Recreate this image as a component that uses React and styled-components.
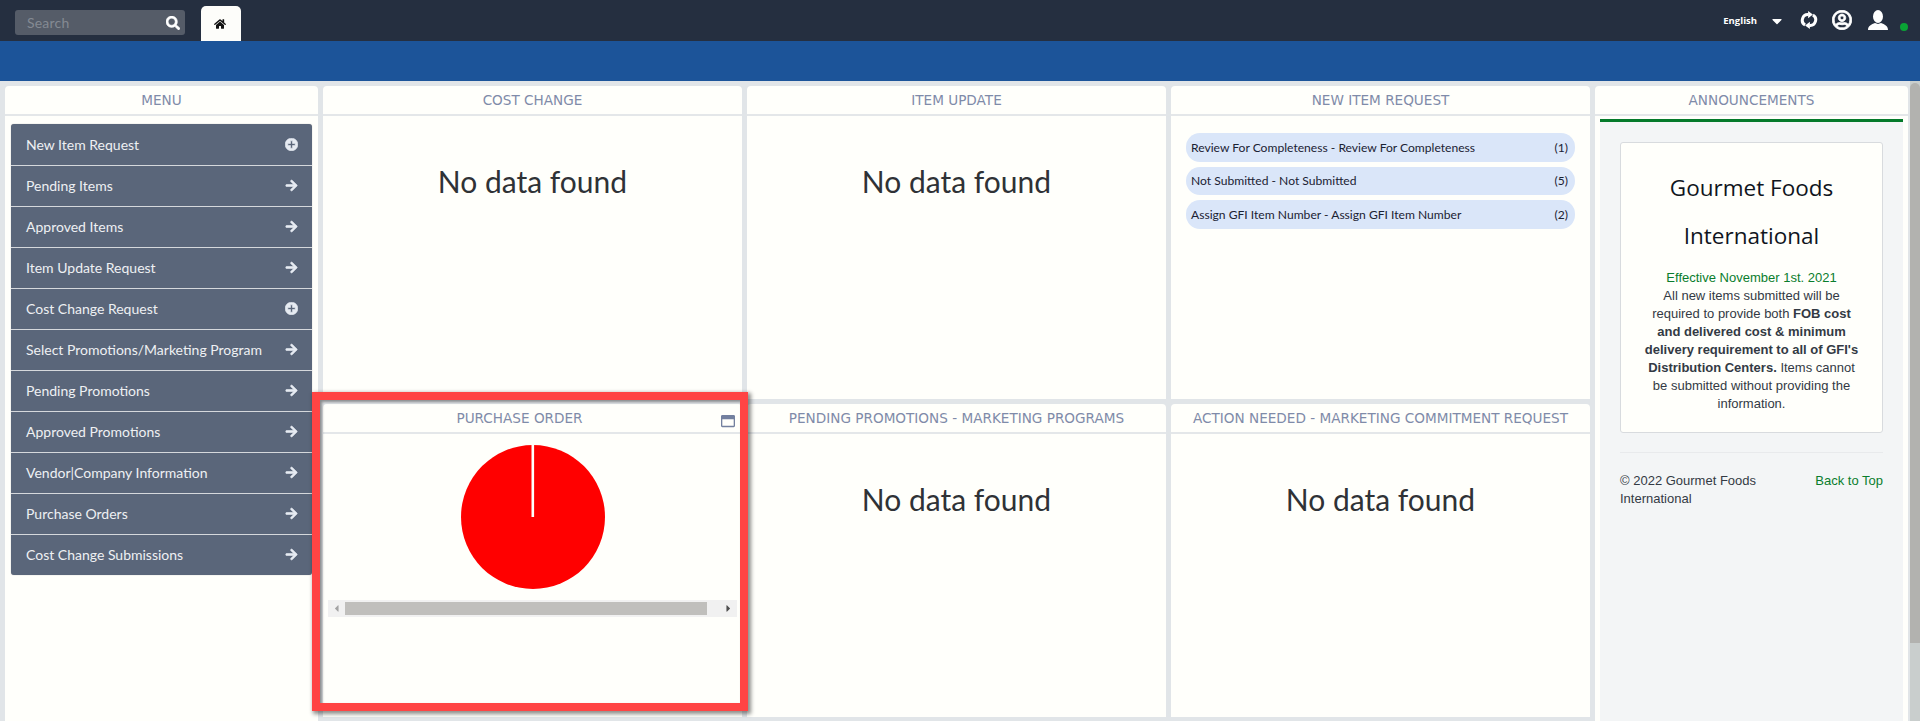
import React from "react";
import styled, { createGlobalStyle } from "styled-components";
import { FaHome, FaSearch, FaPlusCircle, FaArrowRight, FaRegUserCircle, FaCaretDown, FaRegWindowMaximize, FaCaretLeft, FaCaretRight } from "react-icons/fa";

const Global = createGlobalStyle`
  html, body { margin: 0; padding: 0; overflow: hidden; background: #e1e5e8; }
  * { box-sizing: border-box; }
`;

const Page = styled.div`
  width: 1920px; height: 721px; overflow: hidden; display: flex; flex-direction: column;
  background: #e1e5e8; font-family: "Lato", sans-serif;
`;
const TopBar = styled.header`
  height: 41px; flex: none; background: #252f40; display: flex; align-items: flex-start;
  padding-left: 15px; color: #fff;
`;
const SearchBox = styled.div`
  width: 170px; height: 25px; margin-top: 10px; border-radius: 3px; background: #555c68;
  display: flex; align-items: center; justify-content: space-between; padding: 0 5px 0 12px;
  color: #848a93; font-size: 14px; letter-spacing: .2px;
  svg { color: #fff; font-size: 14px; stroke: currentColor; stroke-width: 20; }
`;
const HomeTab = styled.div`
  width: 40px; height: 35px; margin: 6px 0 0 16px; background: #fdfdfa; border-radius: 5px 5px 0 0;
  display: flex; align-items: center; justify-content: center; color: #111; font-size: 12px;
  padding-right: 2px;
`;
const TopRight = styled.div`
  margin-left: auto; display: flex; align-items: center; height: 41px; padding-right: 12px;
`;
const Lang = styled.span`
  font: 700 9.5px "Open Sans", sans-serif; color: #fff; margin-right: 12px;
`;
const Caret = styled(FaCaretDown)`
  font-size: 16px; margin-right: 15px;
`;
const TopIcon = styled.span`
  display: flex; margin-right: ${p => p.$gap}px; margin-top: -1px;
`;
const BoldUserCircle = styled(FaRegUserCircle)`
  font-size: 20px; stroke: currentColor; stroke-width: 22;
`;
const Dot = styled.span`
  width: 8px; height: 8px; border-radius: 50%; background: #0aa335; margin-top: 13px;
`;
const BlueBar = styled.div`
  height: 40px; flex: none; background: #1c5499;
`;
const Content = styled.main`
  flex: 1; display: flex; padding-left: 5px; min-height: 0;
`;
const Board = styled.div`
  display: grid; grid-template-columns: 313px repeat(3, 419px) 313px;
  grid-template-rows: 313px 313px 10px; gap: 5px; padding-top: 5px;
`;
const Panel = styled.section`
  background: #fffffb; border-radius: 4px 4px 0 0; display: flex; flex-direction: column;
  position: relative; min-width: 0; z-index: ${p => p.$lifted ? 2 : 0};
  grid-row: ${p => p.$span ? "1 / span 3" : "auto"};
  grid-column: ${p => p.$col || "auto"};
`;
const PanelHead = styled.div`
  height: 30px; flex: none; border-bottom: 2px solid #e4e7e9;
  display: flex; align-items: center; justify-content: center;
  font: 400 13.6px "DejaVu Sans", sans-serif; color: #7f8ba9; text-transform: uppercase;
  padding-right: ${p => p.$iconSpace ? 26 : 0}px; padding-bottom: 1px;
`;
const MaxButton = styled(FaRegWindowMaximize)`
  position: absolute; right: 7px; top: 10px; font-size: 14px; color: #73809f;
`;
const MenuList = styled.nav`
  margin: 8px 6px 0 6px; border-radius: 3px; overflow: hidden; background: #5a667a;
  box-shadow: 0 0 1px 0 #999;
`;
const MenuRow = styled.div`
  height: 41px; display: flex; align-items: center; justify-content: space-between;
  padding: 0 14px 1px 15px; color: #eef0f3; font-size: 14px;
  border-top: ${p => p.$first ? "none" : "1px solid #d5d8dc"};
  svg { font-size: 13px; color: #e6ebf2; stroke: currentColor; stroke-width: 25; }
`;
const Empty = styled.div`
  text-align: center; font-size: 30px; color: #2f3236; margin-top: 45px; line-height: 40px;
`;
const Pills = styled.div`
  padding: 17px 15px 0; display: flex; flex-direction: column; gap: 5px;
`;
const Pill = styled.div`
  height: 28.5px; border-radius: 14px; background: #dae6f9; display: flex; align-items: center;
  justify-content: space-between; padding: 0 7px 0 5px; font-size: 12.1px; color: #1a2233;
`;
const ChartWrap = styled.div`
  display: flex; justify-content: center; padding-top: 10px;
`;
const HScroll = styled.div`
  margin: 10px 5px 0 5px; height: 17px; background: #f1f1f1; display: flex; align-items: center;
  padding: 0 3px; font-size: 11px;
`;
const ScrollThumb = styled.div`
  width: 362px; height: 13px; background: #c0bfbc;
`;
const ArrowL = styled(FaCaretLeft)` color: #a3a3a3; margin-right: 3px; `;
const ArrowR = styled(FaCaretRight)` color: #505050; margin-left: auto; `;
const Highlight = styled.div`
  position: absolute; left: -11px; right: -6px; top: -12px; bottom: 6px;
  border: 8px solid #ff4444; pointer-events: none;
  box-shadow: 2px 2px 4px 1px rgba(0,0,0,.45), inset 2px 2px 3px rgba(0,0,0,.4);
`;
const AnnBody = styled.div`
  flex: 1; margin: 3px 5px 0; background: #f3f5f6; border-top: 3px solid #047a2a;
  padding: 20px 20px 0 20px; font: 400 13px/18px "Liberation Sans", sans-serif; color: #333a44;
`;
const AnnCard = styled.div`
  height: 291px; background: #fffffb; border: 1px solid #d8dbde; border-radius: 3px;
  padding: 21px 20px 0; text-align: center;
`;
const AnnTitle = styled.h2`
  margin: 0 0 9px; font: 500 22.5px/48px "Open Sans", sans-serif; color: #10151d;
`;
const Green = styled.span` color: #0a7d2d; `;
const Strong = styled.b` font-weight: 700; `;
const Rule = styled.hr`
  border: 0; border-top: 1px solid #e8eaec; margin: 19px 0 19px;
`;
const Foot = styled.div`
  display: flex; justify-content: space-between; align-items: flex-start;
`;
const Copy = styled.div` width: 150px; `;
const Scrollbar = styled.div`
  width: 10px; flex: none; margin-left: 2px; background: #c9cecd;
`;
const ScrollbarThumb = styled.div`
  width: 10px; height: 560px; background: #b2b2af; border-radius: 5px 5px 0 0; margin-top: 2px;
`;

const menu = [
  ["New Item Request", 1], ["Pending Items"], ["Approved Items"], ["Item Update Request"],
  ["Cost Change Request", 1], ["Select Promotions/Marketing Program"], ["Pending Promotions"],
  ["Approved Promotions"], ["Vendor|Company Information"], ["Purchase Orders"], ["Cost Change Submissions"],
];
const pills = [
  ["Review For Completeness - Review For Completeness", 1],
  ["Not Submitted - Not Submitted", 5],
  ["Assign GFI Item Number - Assign GFI Item Number", 2],
];

const RefreshIcon = () => (
  <svg width="18" height="18" viewBox="0 0 17 18" fill="none">
    <path d="M8 3.6A5.6 5.6 0 0 0 4.6 14" stroke="#fff" strokeWidth="3" />
    <path d="M7.6 0L12.4 3.6L7.6 7.2Z" fill="#fff" />
    <path d="M9 14.4A5.6 5.6 0 0 0 12.4 4" stroke="#fff" strokeWidth="3" />
    <path d="M9.4 18L4.6 14.4L9.4 10.8Z" fill="#fff" />
  </svg>
);
const PersonIcon = () => (
  <svg width="20" height="20" viewBox="0 0 20 20" fill="#fff">
    <ellipse cx="10" cy="6.5" rx="5" ry="6.5" />
    <path d="M0 20C0 15.5 3.5 14.5 7 13L10 14L13 13C16.5 14.5 20 15.5 20 20Z" />
  </svg>
);

export default function App() {
  return (
    <Page>
      <Global />
      <TopBar>
        <SearchBox>Search<FaSearch /></SearchBox>
        <HomeTab><FaHome /></HomeTab>
        <TopRight>
          <Lang>English</Lang>
          <Caret />
          <TopIcon $gap={14}><RefreshIcon /></TopIcon>
          <TopIcon $gap={16}><BoldUserCircle /></TopIcon>
          <TopIcon $gap={12}><PersonIcon /></TopIcon>
          <Dot />
        </TopRight>
      </TopBar>
      <BlueBar />
      <Content>
        <Board>
          <Panel $span>
            <PanelHead>Menu</PanelHead>
            <MenuList>
              {menu.map(([label, plus], i) => (
                <MenuRow key={label} $first={i === 0}>
                  {label}
                  {plus ? <FaPlusCircle /> : <FaArrowRight />}
                </MenuRow>
              ))}
            </MenuList>
          </Panel>
          <Panel>
            <PanelHead>Cost Change</PanelHead>
            <Empty>No data found</Empty>
          </Panel>
          <Panel>
            <PanelHead>Item Update</PanelHead>
            <Empty>No data found</Empty>
          </Panel>
          <Panel>
            <PanelHead>New Item Request</PanelHead>
            <Pills>
              {pills.map(([t, n]) => (
                <Pill key={t}><span>{t}</span><span>({n})</span></Pill>
              ))}
            </Pills>
          </Panel>
          <Panel $span $col={5}>
            <PanelHead>Announcements</PanelHead>
            <AnnBody>
              <AnnCard>
                <AnnTitle>Gourmet Foods International</AnnTitle>
                <Green>Effective November 1st. 2021</Green><br />
                All new items submitted will be required to provide both <Strong>FOB cost and delivered cost &amp; minimum delivery requirement to all of GFI's Distribution Centers.</Strong> Items cannot be submitted without providing the information.
              </AnnCard>
              <Rule />
              <Foot>
                <Copy>© 2022 Gourmet Foods International</Copy>
                <Green>Back to Top</Green>
              </Foot>
            </AnnBody>
          </Panel>
          <Panel $lifted>
            <PanelHead $iconSpace>Purchase Order</PanelHead>
            <MaxButton />
            <ChartWrap>
              <svg width="146" height="146" viewBox="0 0 146 146">
                <circle cx="73" cy="73" r="72" fill="#ff0000" />
                <rect x="71.5" y="0" width="2.6" height="73" fill="#fffffb" />
              </svg>
            </ChartWrap>
            <HScroll>
              <ArrowL />
              <ScrollThumb />
              <ArrowR />
            </HScroll>
            <Highlight />
          </Panel>
          <Panel>
            <PanelHead>Pending Promotions - Marketing Programs</PanelHead>
            <Empty>No data found</Empty>
          </Panel>
          <Panel>
            <PanelHead>Action Needed - Marketing Commitment Request</PanelHead>
            <Empty>No data found</Empty>
          </Panel>
        </Board>
        <Scrollbar><ScrollbarThumb /></Scrollbar>
      </Content>
    </Page>
  );
}
